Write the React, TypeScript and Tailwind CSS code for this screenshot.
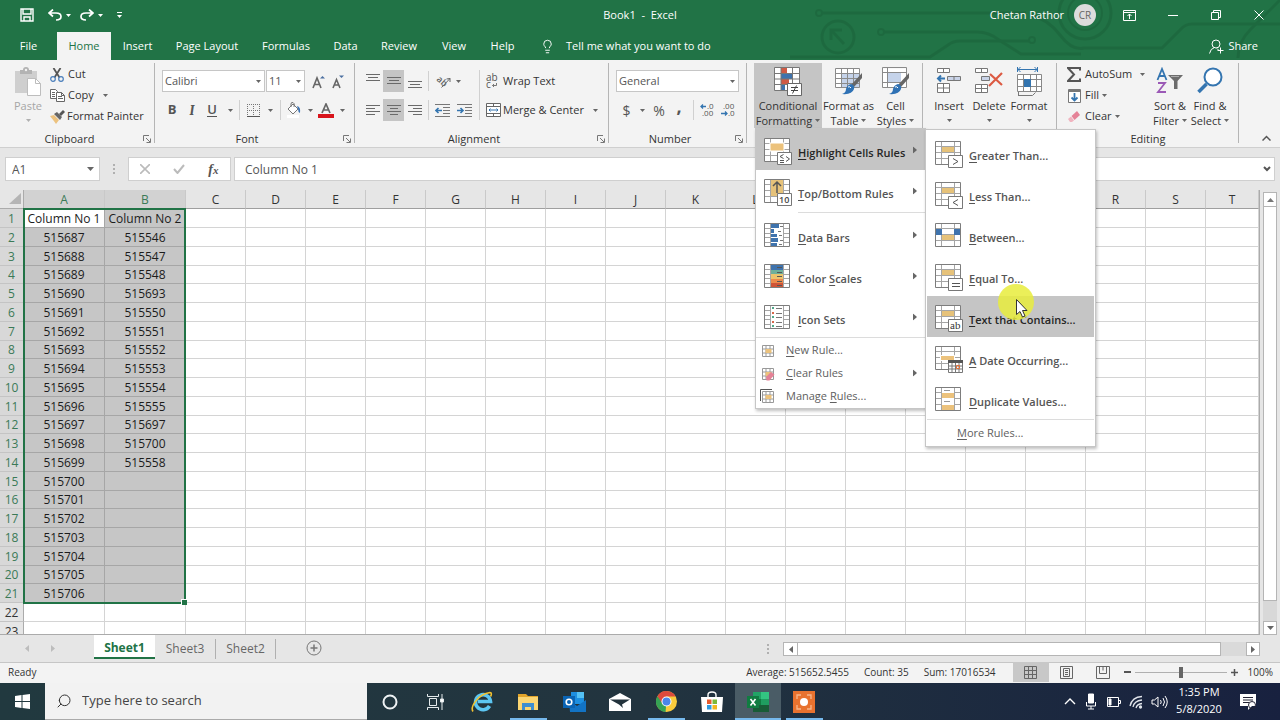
import type { ReactNode } from 'react';
import { Lightbulb, Search } from 'lucide-react';

const tabs = [
  { name: 'File', width: 'w-[57px]' },
  { name: 'Home', width: 'w-[54px]', active: true },
  { name: 'Insert', width: 'w-[53px]' },
  { name: 'Page Layout', width: 'w-[86px]' },
  { name: 'Formulas', width: 'w-[72px]' },
  { name: 'Data', width: 'w-[47px]' },
  { name: 'Review', width: 'w-[60px]' },
  { name: 'View', width: 'w-[50px]' },
  { name: 'Help', width: 'w-[47px]' },
];

const columns = 'ABCDEFGHIJKLMNOPQRST'.split('');

const columnA = [
  'Column No 1', '515687', '515688', '515689', '515690', '515691', '515692', '515693', '515694', '515695', '515696',
  '515697', '515698', '515699', '515700', '515701', '515702', '515703', '515704', '515705', '515706',
];
const columnB = [
  'Column No 2', '515546', '515547', '515548', '515693', '515550', '515551', '515552', '515553', '515554', '515555',
  '515697', '515700', '515558',
];

const rows = Array.from({ length: 23 }, (_, i) => ({ n: i + 1, a: columnA[i] ?? '', b: columnB[i] ?? '' }));

/* ---------- small shared pieces ---------- */

function Caret({ className = 'text-[#666]' }: { className?: string }) {
  return (
    <svg width="5" height="3" viewBox="0 0 5 3" className={`shrink-0 ${className}`}>
      <path d="M0 0h5L2.5 3z" fill="currentColor" />
    </svg>
  );
}

function Launcher({ label }: { label: string }) {
  return (
    <button aria-label={label} className="absolute right-1 bottom-1">
      <svg width="8" height="8" viewBox="0 0 8 8" fill="none" stroke="#777">
        <path d="M.5 6V.5H6M3 3l4 4M7.500 3.500v4h-4" />
      </svg>
    </button>
  );
}

function Group({ label, width, launcher, children }: { label?: string; width: string; launcher?: boolean; children: ReactNode }) {
  return (
    <section className={`relative flex shrink-0 flex-col ${width}`}>
      <div className="flex h-[68px] shrink-0">{children}</div>
      {label && <div className={`text-center leading-4 ${launcher ? 'pr-4' : ''}`}>{label}</div>}
      {launcher && <Launcher label={`${label} settings`} />}
      <div className="absolute top-0 right-0 bottom-1 w-px bg-[#b5b5b5]" />
    </section>
  );
}

function Divider() {
  return <div className="h-5 w-px shrink-0 bg-[#d0d0d0]" />;
}

function IconButton({ label, width = 'w-[21px]', active, children }: { label: string; width?: string; active?: boolean; children: ReactNode }) {
  return (
    <button aria-label={label} className={`flex h-[22px] shrink-0 items-center justify-center ${width} ${active ? 'bg-[#c5c5c5]' : ''}`}>
      {children}
    </button>
  );
}

function BigButton({ lines, width, active, children }: { lines: [string, string?]; width: string; active?: boolean; children: ReactNode }) {
  return (
    <button className={`flex h-[65px] shrink-0 flex-col items-center pt-1 ${width} ${active ? 'bg-[#c5c5c5]' : ''}`}>
      <span className="flex h-[31px] items-start">{children}</span>
      <span className="leading-[15px] whitespace-nowrap">{lines[0]}</span>
      <span className="flex h-[15px] items-center gap-[3px] leading-[15px]">
        {lines[1]}
        <Caret />
      </span>
    </button>
  );
}

function Lines({ rows: r }: { rows: [number, number, number][] }) {
  return (
    <svg width="14" height="14" viewBox="0 0 14 14" stroke="#6a6a6a">
      {r.map(([x1, x2, y]) => (
        <path key={y} d={`M${x1} ${y}.5H${x2}`} />
      ))}
    </svg>
  );
}

/* ---------- ribbon icons ---------- */

function PasteIcon() {
  return (
    <svg width="28" height="30" viewBox="0 0 28 30">
      <path d="M1 4h22v22H1z" fill="#cfcfcf" />
      <path d="M6 3h3q0-3 3-3t3 3h3v4H6z" fill="#b3b3b3" />
      <circle cx="12" cy="3" r="1.200" fill="#f3f3f3" />
      <path d="M13.500 11.500h8l5 5v12h-13z" fill="#fff" stroke="#bdbdbd" />
      <path d="M21.500 11.500v5h5" fill="none" stroke="#bdbdbd" />
    </svg>
  );
}

function CutIcon() {
  return (
    <svg width="14" height="14" viewBox="0 0 14 14" fill="none">
      <path d="M3.500 0 9.500 9.500M10.500 0 4.500 9.500" stroke="#555" strokeWidth="1.800" />
      <circle cx="3" cy="11" r="2.300" stroke="#4a7ebb" strokeWidth="1.200" />
      <circle cx="11" cy="11" r="2.300" stroke="#4a7ebb" strokeWidth="1.200" />
    </svg>
  );
}

function CopyIcon() {
  return (
    <svg width="15" height="13" viewBox="0 0 15 13" fill="#fff" stroke="#666">
      <path d="M.5.5h5l2 2v7h-7zM2 3.500h3M2 5.500h3M2 7.500h3" />
      <path d="M6.500 3.500h5l3 3v6h-8zM8 7.500h4M8 9.500h5" />
      <path d="M11.500 3.500v3h3" fill="none" />
    </svg>
  );
}

function PainterIcon() {
  return (
    <svg width="15" height="14" viewBox="0 0 15 14">
      <path d="M0 6l4-1 5 5-3 4q-2-3-6-8z" fill="#ecc27f" />
      <path d="M4 4l3-2 5 5-2 3z" fill="#666" />
      <path d="M9 4l4-4 2 2-4 4z" fill="#555" />
    </svg>
  );
}

function FontSizeIcon({ up }: { up?: boolean }) {
  return (
    <svg width="14" height="15" viewBox="0 0 14 15">
      <path d={up ? 'M1 14 5 4 9 14M2.500 10.500h5' : 'M2 14 5.500 5.500 9 14M3.500 11h4'} fill="none" stroke="#666" strokeWidth="1.600" />
      <path d={up ? 'M8 4.500 10.500 2l2.500 2.500z' : 'M8 1.500h5L10.500 4z'} fill="#4a6fa0" />
    </svg>
  );
}

function BordersIcon() {
  return (
    <svg width="13" height="13" viewBox="0 0 13 13" fill="none" stroke="#777">
      <path d="M.5 0v12M6.500 0v12M12.500 0v12M0 .5h13M0 6.500h13" strokeDasharray="1 1" />
      <path d="M0 12.500h13" stroke="#555" />
    </svg>
  );
}

function BucketIcon() {
  return (
    <svg width="14" height="16" viewBox="0 0 14 16" fill="none">
      <path d="M1 7 6 2l5 5-5 5z" fill="#fff" stroke="#777" />
      <path d="M4 5V2q0-2 2-1.500T7 5" stroke="#777" />
      <path d="M10 4q4 1 3 7-2-1-2-4z" fill="#3f75b5" />
      <path d="M0 13h12v3H0z" fill="#fff" />
    </svg>
  );
}

function FontColorIcon() {
  return (
    <svg width="16" height="15" viewBox="0 0 16 15">
      <path d="M4 10 8 1l4 9M5.500 7h5" fill="none" stroke="#666" strokeWidth="1.700" />
      <path d="M0 11h16v4H0z" fill="#d8141b" />
    </svg>
  );
}

function OrientationIcon() {
  return (
    <svg width="16" height="16" viewBox="0 0 16 16" className="overflow-visible">
      <text x="1" y="7" transform="rotate(42 1 7)" fontSize="9" fontWeight="600" fill="#666" fontFamily="Open Sans, sans-serif">ab</text>
      <path d="M6.500 14.500 15 5.500M15 5.500l-3.500.5M15 5.500v3.500" fill="none" stroke="#666" />
    </svg>
  );
}

function IndentIcon({ right }: { right?: boolean }) {
  return (
    <svg width="16" height="13" viewBox="0 0 16 13" fill="none">
      <path d="M0 .5h15M8 3.500h7M8 6.500h7M8 9.500h7M0 12.500h15" stroke="#777" />
      <path d={right ? 'M0 6.500h6M3.500 4 6 6.500 3.500 9' : 'M7 6.500H1M3.500 4 1 6.500 3.500 9'} stroke="#3475b0" strokeWidth="1.600" />
    </svg>
  );
}

function WrapIcon() {
  return (
    <svg width="13" height="15" viewBox="0 0 13 15" fill="#555" fontFamily="Open Sans, sans-serif" fontSize="10" className="overflow-visible">
      <text x="0" y="7">ab</text>
      <text x="0" y="14">c</text>
      <path d="M10.500 9v2.500H6.500M8 10l-1.500 1.500L8 13" fill="none" stroke="#777" />
    </svg>
  );
}

function MergeIcon() {
  return (
    <svg width="15" height="14" viewBox="0 0 15 14" fill="none">
      <path d="M.5.5h14v13H.5zM.5 3.500h14M.5 10.500h14M7.500 0v3M7.500 11v3" fill="#fff" stroke="#666" />
      <path d="M3 7h9M4.500 5.500 3 7l1.500 1.500M10.500 5.500 12 7l-1.500 1.500" stroke="#3475b0" />
    </svg>
  );
}

function DecimalIcon({ more }: { more?: boolean }) {
  return (
    <svg width="15" height="14" viewBox="0 0 15 14" fontSize="8" fill="#555" fontFamily="Open Sans, sans-serif" className="overflow-visible">
      <text x={more ? 7 : 2} y="6">{more ? '.0' : '.00'}</text>
      <text x={more ? 2 : 7} y="13">{more ? '.00' : '.0'}</text>
      <path d={more ? 'M6 3.500H1M3 1.500l-2 2 2 2' : 'M0 10.500h6M4 8.500l2 2-2 2'} fill="none" stroke="#3475b0" strokeWidth="1.300" />
    </svg>
  );
}

function ConditionalIcon() {
  return (
    <svg width="28" height="29" viewBox="0 0 28 29">
      <path d="M.5.5h25v23H.5z" fill="#fff" />
      <path d="M7 1h6v5H7zM7 12h8v5H7z" fill="#cf5a45" />
      <path d="M7 6h11v6H7zM7 17h4v6H7z" fill="#3f73ad" />
      <path d="M.5.5h25v23H.5zM.5 6.500h25M.5 12h25M.5 17.500h25M7 0v23M18.500 0v23" fill="none" stroke="#777" />
      <path d="M13.500 16.500h14v12h-14z" fill="#fff" stroke="#666" />
      <path d="M17 20.500h7M17 23.500h7M22.500 18.500l-4 8" stroke="#444" fill="none" />
    </svg>
  );
}

function TableBrushIcon({ cell }: { cell?: boolean }) {
  return (
    <svg width="28" height="29" viewBox="0 0 28 29">
      <path d="M.5 1.500h24v19H.5z" fill="#fff" />
      <path d={cell ? 'M5 6h14v9H5z' : 'M7 7h18v14H7z'} fill="#c5d3ea" />
      <path
        d={cell ? 'M.5.5h24v20H.5zM.5 5.500h24M5.500 0v20M.5 15.500h19' : 'M.5 1.500h24v19H.5zM.5 6.500h24M.5 11.500h24M.5 16.500h24M6.500 1v19M12.500 1v19M18.500 1v19'}
        fill="none"
        stroke="#8a8a8a"
      />
      <path d="M27 6v5l-8 9-3-2z" fill="#666" />
      <path d="M16 17q4 1 3 5-2 6-12 5 4-1 4-5 1-4 5-5z" fill="#2f72b5" />
      <path d="M13 20q2-1 3 1" stroke="#fff" fill="none" />
    </svg>
  );
}

function InsertCellsIcon() {
  return (
    <svg width="26" height="27" viewBox="0 0 26 27" fill="none" stroke="#777">
      <path d="M1.500 1.500h12v4h-12zM7.500 1.500v4M1.500 16.500h12v9h-12zM7.500 16.500v9M1.500 21h12" fill="#fff" />
      <path d="M11.500 9.500h13v4h-13zM18 9.500v4" fill="#c9d3e8" />
      <path d="M9 11.500H2M5 8.500l-3 3 3 3" stroke="#3475b0" strokeWidth="2" />
    </svg>
  );
}

function DeleteCellsIcon() {
  return (
    <svg width="28" height="27" viewBox="0 0 28 27" fill="none" stroke="#777">
      <path d="M.5 1.500h12v4H.5zM6.500 1.500v4M.5 17.500h12v8H.5zM6.500 17.500v8M.5 21.500h12" fill="#fff" />
      <path d="M6.500 9.500h8v4h-8z" fill="#c9d3e8" />
      <path d="M15 7l12 11M27 6 14 19" stroke="#dc5a42" strokeWidth="2.200" />
    </svg>
  );
}

function FormatCellsIcon() {
  return (
    <svg width="27" height="30" viewBox="0 0 27 30" fill="none">
      <path d="M1.500 0v5M21.500 0v5M2 2.500h19M4.500 0 2 2.500 4.500 5M18.500 0 21 2.500 18.500 5" stroke="#3475b0" />
      <path d="M1.500 7.500h24v17h-24zM1.500 12.500h24M1.500 19.500h24M7.500 7v18M14.500 7v18M20.500 7v18" fill="#fff" stroke="#888" />
      <path d="M8 12h7v8H8z" fill="#3475b0" />
      <path d="M2.500 28.500h14l3-3M2.500 25v4" stroke="#777" />
    </svg>
  );
}

function FillIcon() {
  return (
    <svg width="13" height="14" viewBox="0 0 13 14" fill="none">
      <path d="M.5.5h12v13H.5z" fill="#fff" stroke="#777" />
      <path d="M0 2h13" stroke="#777" strokeWidth="2" />
      <path d="M6.500 4v8M3.500 8.500l3 3 3-3" stroke="#3475b0" strokeWidth="1.800" />
    </svg>
  );
}

function EraserIcon() {
  return (
    <svg width="13" height="12" viewBox="0 0 13 12">
      <path d="M3.500 5 9 0l3 4-5.500 5z" fill="#e58297" />
      <path d="M3 5.500 6 9.500 4 11H2L0 8z" fill="#f0b4bf" />
    </svg>
  );
}

function SortIcon() {
  return (
    <svg width="28" height="28" viewBox="0 0 28 28" fill="none">
      <path d="M1.500 13 6 2l4.500 11M3 9h6" stroke="#3475b0" strokeWidth="1.800" />
      <path d="M2 16h7L2 25h8" stroke="#9b59b6" strokeWidth="1.800" />
      <path d="M12 8h15l-5.500 6v8h-3.500v-8z" fill="#6c6c6c" />
      <path d="M15 9.500h8" stroke="#aaa" />
    </svg>
  );
}

function FindIcon() {
  return (
    <svg width="26" height="27" viewBox="0 0 26 27" fill="none" stroke="#3475b0">
      <circle cx="16" cy="10" r="8.500" fill="#fff" strokeWidth="2" />
      <path d="M9.500 17 1.500 25" strokeWidth="3.500" />
    </svg>
  );
}

/* ---------- menu icons ---------- */

function GridIcon({ fill, badge, dense }: { fill?: ReactNode; badge?: ReactNode; dense?: boolean }) {
  return (
    <svg width="28" height="28" viewBox="0 0 28 28" className="shrink-0">
      <path d="M.5.5h25v23H.5z" fill="#fff" />
      <path
        d={dense ? 'M1 5.500h24M1 10.500h24M1 14.500h24M1 19.500h24M6.500 1v22M19.500 1v22' : 'M1 5.500h24M1 11.500h24M1 17.500h24M6.500 1v22M19.500 1v22'}
        fill="none"
        stroke="#a5a5a5"
      />
      {fill}
      <path d="M.5.5h25v23H.5z" fill="none" stroke="#7d7d7d" />
      {badge}
    </svg>
  );
}

function Badge({ children }: { children: ReactNode }) {
  return (
    <g fill="none" stroke="#555">
      <path d="M13.500 14.500h14v12h-14z" fill="#fff" stroke="#777" />
      {children}
    </g>
  );
}

const goldCell = <path d="M7 6h12v5H7z" fill="#e6c27a" />;

const ruleItems = [
  {
    name: ['', 'H', 'ighlight Cells Rules'],
    active: true,
    icon: (
      <GridIcon
        fill={<path d="M6 5h14v8H6z" fill="#ecc27c" stroke="#fff" />}
        badge={<Badge><path d="M19.500 16.500 16 18.500l3.500 2M16 22.500h4M16 24.500h4M22 18.500l3.500 2.500-3.500 2.500" /></Badge>}
      />
    ),
  },
  {
    name: ['', 'T', 'op/Bottom Rules'],
    icon: (
      <GridIcon
        fill={<><path d="M7 1h12v16H7z" fill="#e6c27a" /><path d="M13 14V3M9 7l4-4 4 4" fill="none" stroke="#555" strokeWidth="1.500" /></>}
        badge={<Badge><text x="15" y="24" fontSize="9" fill="#444" stroke="none" fontFamily="Open Sans, sans-serif">10</text></Badge>}
      />
    ),
  },
  {
    name: ['', 'D', 'ata Bars'],
    icon: (
      <GridIcon
        dense
        fill={<><path d="M7 1h12v22H7z" fill="#fff" /><path d="M7 1h8v4H7zM7 6h3v4H7zM7 11h6v3H7zM7 15h7v4H7zM7 20h6v3H7z" fill="#3f73ad" /><path d="M16 3.500h3M14 8.500h3M15 12.500h3M16 17.500h3M15 21.500h3" stroke="#777" /></>}
      />
    ),
  },
  {
    name: ['Color ', 'S', 'cales'],
    icon: (
      <GridIcon
        dense
        fill={
          <>
            <path d="M7 1h12v5H7z" fill="#3f73ad" />
            <path d="M7 6h12v4H7z" fill="#6db09a" />
            <path d="M7 10h12v5H7z" fill="#ecc46c" />
            <path d="M7 15h12v4H7z" fill="#ec8a4b" />
            <path d="M7 19h12v4H7z" fill="#cf5436" />
            <path d="M13 3.500h5M13 8.500h5M13 12.500h5M13 17.500h5M13 21.500h5" stroke="#555" />
          </>
        }
      />
    ),
  },
  {
    name: ['', 'I', 'con Sets'],
    icon: (
      <GridIcon
        dense
        fill={
          <>
            <path d="M7 1h12v22H7z" fill="#fff" />
            <path d="M12 3.500h6M12 8.500h6M12 12.500h6M12 17.500h6M12 21.500h6" stroke="#777" />
            <path d="M8 2h2v2H8zM8 11h2v2H8zM8 20h2v2H8z" fill="#4fa98a" />
            <path d="M8 7h2v2H8zM8 16h2v2H8z" fill="#d9684a" />
          </>
        }
      />
    ),
  },
];

function SmallGrid({ eraser, stacked }: { eraser?: boolean; stacked?: boolean }) {
  return (
    <svg width="15" height="15" viewBox="0 0 15 15" fill="none" className="shrink-0">
      {stacked && <path d="M.5 12V.5H12" stroke="#555" />}
      <path d="M2.500 2.500h11v11h-11zM2.500 6h11M2.500 10h11M6 2.500v11M10 2.500v11" fill="#fff" stroke="#999" />
      <path d="M5.500 6h6v4h-6z" fill="#ecc27c" />
      {eraser && <path d="M6 11l5-5 3.500 2.500-5 6H6.500z" fill="#e58297" />}
    </svg>
  );
}

const manageItems = [
  { name: ['', 'N', 'ew Rule...'], icon: <SmallGrid /> },
  { name: ['', 'C', 'lear Rules'], icon: <SmallGrid eraser />, more: true },
  { name: ['Manage ', 'R', 'ules...'], icon: <SmallGrid stacked /> },
];

const highlightItems = [
  { name: ['', 'G', 'reater Than...'], icon: <GridIcon fill={goldCell} badge={<Badge><path d="M18 17.500l5 3-5 3" /></Badge>} /> },
  { name: ['', 'L', 'ess Than...'], icon: <GridIcon fill={goldCell} badge={<Badge><path d="M23 17.500l-5 3 5 3" /></Badge>} /> },
  {
    name: ['', 'B', 'etween...'],
    icon: <GridIcon fill={<><path d="M1 6h6v6H1zM19 6h6v6h-6z" fill="#3f73ad" /><path d="M7 12h12v5H7z" fill="#e6c27a" /></>} />,
  },
  { name: ['', 'E', 'qual To...'], icon: <GridIcon fill={goldCell} badge={<Badge><path d="M17 19.500h8M17 22.500h8" /></Badge>} /> },
  {
    name: ['', 'T', 'ext that Contains...'],
    active: true,
    icon: (
      <GridIcon
        fill={goldCell}
        badge={<Badge><text x="15" y="24" fontSize="11" fontWeight="400" fill="#333" stroke="none" fontFamily="Liberation Serif, serif">ab</text></Badge>}
      />
    ),
  },
  {
    name: ['', 'A', ' Date Occurring...'],
    icon: (
      <GridIcon
        fill={<path d="M5.500 9.500h14v5h-14z" fill="#ecc27c" stroke="#fff" />}
        badge={
          <g fill="none">
            <path d="M13.500 14.500h14v12h-14zM13.500 20h14M13.500 23h14M17 17v9.500M20.500 17v9.500M24 17v9.500" fill="#fff" stroke="#777" />
            <path d="M13 14h15v3H13z" fill="#555" />
            <path d="M21.500 19.500h3v3h-3z" stroke="#e0703a" />
          </g>
        }
      />
    ),
  },
  {
    name: ['', 'D', 'uplicate Values...'],
    icon: <GridIcon fill={<><path d="M7 1h12v22H7z" fill="#fff" /><path d="M7 6h12v5H7zM7 18h12v5H7z" fill="#ecc27c" /><path d="M9 3.500h6M9 14.500h6" stroke="#999" /></>} />,
  },
];

function Mnemonic({ parts }: { parts: string[] }) {
  return (
    <span className="whitespace-nowrap">
      {parts[0]}
      <span className="underline underline-offset-2">{parts[1]}</span>
      {parts[2]}
    </span>
  );
}

function MoreArrow() {
  return (
    <svg width="4" height="7" viewBox="0 0 4 7" className="absolute top-1/2 right-2 -translate-y-1/2">
      <path d="M0 0v7l4-3.500z" fill="#666" />
    </svg>
  );
}

function BigMenuItem({ item, arrow }: { item: { name: string[]; icon: ReactNode; active?: boolean }; arrow?: boolean }) {
  return (
    <button
      role="menuitem"
      className={`relative flex h-[41px] w-full items-center gap-[6px] pt-1 pl-2 text-left font-semibold ${item.active ? 'bg-[#c5c5c5] text-[#262626]' : 'text-[#555]'}`}
    >
      {item.icon}
      <span className="pt-[3px]">
        <Mnemonic parts={item.name} />
      </span>
      {arrow && <MoreArrow />}
    </button>
  );
}

/* ---------- taskbar ---------- */

const apps = [
  {
    name: 'Cortana',
    icon: <svg width="18" height="18" viewBox="0 0 18 18"><circle cx="9" cy="9" r="6.500" fill="none" stroke="#eef2f4" strokeWidth="2" /></svg>,
  },
  {
    name: 'Task View',
    icon: (
      <svg width="18" height="18" viewBox="0 0 18 18" fill="none" stroke="#e4eaec">
        <path d="M.5 1v2.500h11V1M.5 17v-2.500h11V17M2.500 5.500h7v7h-7zM15 1v16" />
        <path d="M13.500 6h3v3h-3z" fill="#fff" />
      </svg>
    ),
  },
  {
    name: 'Internet Explorer',
    icon: (
      <svg width="22" height="22" viewBox="0 0 22 22" fill="none">
        <path d="M18.500 15a7.500 7.500 0 1 1 1-4.500H7" stroke="#5cc6f2" strokeWidth="3.600" />
        <path d="M2 20.500C-1 16 7 3 19 1.500c2 0 1.500 2.500.5 4" stroke="#f2c230" strokeWidth="1.600" />
      </svg>
    ),
  },
  {
    name: 'File Explorer',
    open: true,
    icon: (
      <svg width="20" height="18" viewBox="0 0 20 18">
        <path d="M0 1h8l2 2h10v14H0z" fill="#e2a52b" />
        <path d="M0 4h20v13H0z" fill="#fbd672" />
        <path d="M4 10h12v7h-3v-3H7v3H4z" fill="#3e8fd0" />
      </svg>
    ),
  },
  {
    name: 'Outlook',
    icon: (
      <svg width="23" height="21" viewBox="0 0 23 21">
        <path d="M8 1h13v12H8z" fill="#1d8fe0" />
        <path d="M14 1h7v6h-7z" fill="#54c1f4" />
        <path d="M6 9l8 6 9-6v12H7z" fill="#1273c4" />
        <path d="M0 5h12v12H0z" fill="#0a64b4" />
        <circle cx="6" cy="11" r="2.800" fill="none" stroke="#fff" strokeWidth="1.600" />
      </svg>
    ),
  },
  {
    name: 'Mail',
    icon: (
      <svg width="24" height="20" viewBox="0 0 24 20">
        <path d="M1 7 12 1l11 6v12H1z" fill="#fff" />
        <path d="M2 7.500h20l-8 5 1 3.500-4-3.500z" fill="#22323c" />
      </svg>
    ),
  },
  {
    name: 'Chrome',
    open: true,
    icon: (
      <svg width="21" height="21" viewBox="0 0 21 21">
        <circle cx="10.500" cy="10.500" r="10.500" fill="#f9cb3c" />
        <path d="M10.500 10.500 1.400 5.200A10.500 10.500 0 0 0 9.500 21z" fill="#35a254" />
        <path d="M1.400 5.200A10.500 10.500 0 0 1 19.600 5.500H10.500L6 12z" fill="#dc4a3d" />
        <circle cx="10.500" cy="10.500" r="5" fill="#fff" />
        <circle cx="10.500" cy="10.500" r="4" fill="#4a86e8" />
      </svg>
    ),
  },
  {
    name: 'Microsoft Store',
    icon: (
      <svg width="22" height="22" viewBox="0 0 22 22">
        <path d="M7 7V4q0-3 4-3t4 3v3" fill="none" stroke="#fff" strokeWidth="1.400" />
        <path d="M0 6h22l-1 15H1z" fill="#fff" />
        <path d="M6 8.500h4.500V13H6z" fill="#e85a2c" />
        <path d="M11.500 8.500H16V13h-4.500z" fill="#7cb93a" />
        <path d="M6 14h4.500v4.500H6z" fill="#2f9be0" />
        <path d="M11.500 14H16v4.500h-4.500z" fill="#f3b61f" />
      </svg>
    ),
  },
  {
    name: 'Excel',
    open: true,
    active: true,
    icon: (
      <svg width="22" height="20" viewBox="0 0 22 20">
        <path d="M6 0h16v20H6z" fill="#21a366" />
        <path d="M14 0h8v7h-8z" fill="#33c481" />
        <path d="M6 7h8v7H6z" fill="#107c41" />
        <path d="M6 13h16v7H6z" fill="#185c37" />
        <path d="M14 7h8v6h-8z" fill="#1f9d60" />
        <path d="M0 4h12v12H0z" fill="#107c41" />
        <path d="M3.500 7l5 6.500M8.500 7l-5 6.500" stroke="#fff" strokeWidth="1.600" />
      </svg>
    ),
  },
  {
    name: 'Screen Recorder',
    open: true,
    icon: (
      <svg width="22" height="22" viewBox="0 0 22 22" fill="none">
        <path d="M0 0h22v22H0z" fill="#e8722f" />
        <circle cx="11" cy="11" r="4" fill="#fff" />
        <path d="M4 8V4h4M14 4h4v4M18 14v4h-4M8 18H4v-4" stroke="#f6b68c" strokeWidth="1.300" />
      </svg>
    ),
  },
];

/* ---------- sections ---------- */

function TitleArt() {
  return (
    <svg className="absolute top-0 right-0 h-[60px] w-[500px]" viewBox="0 0 500 60" fill="none" stroke="#1b6139" strokeWidth="3">
      <g opacity=".5">
        <circle cx="39" cy="13" r="3" strokeWidth="2" />
        <path d="M42 13h204" />
        <circle cx="58" cy="37" r="16" />
        <path d="M64 44 52 31M51 40V30h11" />
        <circle cx="101" cy="32" r="3" strokeWidth="2" />
        <path d="M104 32h93q12 0 22 8l22 14h60" />
        <path d="M10 57h140l18-12q5-4 12-4h69" />
        <circle cx="252" cy="40" r="3" strokeWidth="2" />
        <path d="M250 15q18 4 30 20t24 13h78l18-18q5-6 12-6h88" />
        <circle cx="305" cy="13" r="26" />
        <circle cx="305" cy="13" r="17" strokeWidth="2" />
        <path d="M458 58q0-16 12-28L500 0" />
      </g>
    </svg>
  );
}

function TitleBar() {
  return (
    <div className="relative flex h-[30px] items-center">
      <div className="flex flex-1 items-center">
        <button aria-label="Save" className="mr-[14px] ml-5">
          <svg width="14" height="14" viewBox="0 0 14 14" fill="none" stroke="#fff" strokeWidth="1.400">
            <path d="M1 1h12v12H1zM3 1v5h8V1M4 13V9h6v4" />
          </svg>
        </button>
        <button aria-label="Undo" className="flex items-center gap-1">
          <svg width="14" height="12" viewBox="0 0 14 12" fill="none" stroke="#fff" strokeWidth="1.700">
            <path d="M5 .5 1 4l4 3.500M1 4h7q5 0 5 3.500T8 11" />
          </svg>
          <Caret className="text-white" />
        </button>
        <button aria-label="Redo" className="ml-[9px] flex items-center gap-1">
          <svg width="14" height="12" viewBox="0 0 14 12" fill="none" stroke="#fff" strokeWidth="1.700">
            <path d="M9 .5 13 4 9 7.500M13 4H6Q1 4 1 7.500T6 11" />
          </svg>
          <Caret className="text-white" />
        </button>
        <button aria-label="Customize Quick Access Toolbar" className="ml-[14px] flex flex-col items-center gap-[2px]">
          <span className="h-px w-[5px] bg-white" />
          <Caret className="text-white" />
        </button>
      </div>
      <div className="whitespace-pre">Book1  -  Excel</div>
      <div className="flex flex-1 items-center justify-end">
        <span>Chetan Rathor</span>
        <span className="mr-3 ml-[10px] flex size-[22px] items-center justify-center rounded-full bg-[#dcdcdc] text-[10px] text-[#666]">CR</span>
        <button aria-label="Ribbon Display Options" className="flex h-[30px] w-[43px] items-center justify-center">
          <svg width="13" height="11" viewBox="0 0 13 11" fill="none" stroke="#fff">
            <path d="M.5.5h12v10H.5zM.5 2.500h12M6.500 9V4M4.500 6l2-2 2 2" />
          </svg>
        </button>
        <button aria-label="Minimize" className="flex h-[30px] w-[43px] items-center justify-center">
          <span className="h-px w-[10px] bg-white" />
        </button>
        <button aria-label="Restore" className="flex h-[30px] w-[43px] items-center justify-center">
          <svg width="10" height="10" viewBox="0 0 10 10" fill="none" stroke="#fff">
            <path d="M.5 2.500h7v7h-7zM2.500 2.500v-2h7v7h-2" />
          </svg>
        </button>
        <button aria-label="Close" className="flex h-[30px] w-[43px] items-center justify-center">
          <svg width="10" height="10" viewBox="0 0 10 10" fill="none" stroke="#fff">
            <path d="M.5.5l9 9M9.500.5l-9 9" />
          </svg>
        </button>
      </div>
    </div>
  );
}

function TabBar() {
  return (
    <nav className="relative flex h-[30px] items-end">
      {tabs.map((tab) => (
        <button key={tab.name} className={`h-[28px] shrink-0 whitespace-nowrap ${tab.width} ${tab.active ? 'bg-[#f3f3f3] text-[#217346]' : ''}`}>
          {tab.name}
        </button>
      ))}
      <button className="ml-[14px] flex h-[28px] items-center gap-[11px] whitespace-nowrap">
        <Lightbulb size={15} strokeWidth={1.5} />
        Tell me what you want to do
      </button>
      <button className="mr-[22px] ml-auto flex h-[28px] items-center gap-1">
        <svg width="15" height="15" viewBox="0 0 15 15" fill="none" stroke="#fff">
          <circle cx="7" cy="5" r="4" />
          <path d="M.5 14.500q1-5 5-6M8 9.500l1.500 1.500M11.500 8.500v6M8.500 11.500h6" />
        </svg>
        Share
      </button>
    </nav>
  );
}

function Ribbon() {
  return (
    <div className="relative flex h-[88px] shrink-0 border-b border-[#cfcfcf] bg-[#f3f3f3] pt-[3px] text-[#333]">
      <Group label="Clipboard" width="w-[155px]" launcher>
        <button className="ml-[14px] flex w-7 flex-col items-center pt-1 text-[#a6a6a6]">
          <PasteIcon />
          <span className="pt-px leading-[16px]">Paste</span>
          <span className="pt-[5px]"><Caret className="text-[#b0b0b0]" /></span>
        </button>
        <div className="ml-2 flex flex-col pt-px">
          <button className="flex h-[21px] items-center gap-1"><CutIcon />Cut</button>
          <button className="flex h-[21px] items-center gap-[3px]"><CopyIcon />Copy<span className="ml-[6px]"><Caret /></span></button>
          <button className="flex h-[21px] items-center gap-[2px] whitespace-nowrap"><PainterIcon />Format Painter</button>
        </div>
      </Group>

      <Group label="Font" width="w-[200px]" launcher>
        <div className="flex flex-col gap-[7px] pt-[7px] pl-[7px]">
          <div className="flex">
            <div className="relative mr-px flex items-center">
              <select aria-label="Font" className="h-[22px] w-[103px] appearance-none border border-[#c6c6c6] bg-white pl-[2px] text-[#555]">
                <option>Calibri</option>
              </select>
              <span className="absolute right-1"><Caret /></span>
            </div>
            <div className="relative mr-[3px] flex items-center">
              <select aria-label="Font size" className="h-[22px] w-[39px] appearance-none border border-[#c6c6c6] bg-white pl-[2px] text-[#555]">
                <option>11</option>
              </select>
              <span className="absolute right-1"><Caret /></span>
            </div>
            <IconButton label="Increase font size"><FontSizeIcon up /></IconButton>
            <IconButton label="Decrease font size" width="w-[17px]"><FontSizeIcon /></IconButton>
          </div>
          <div className="flex items-center">
            <IconButton label="Bold" width="w-[20px]"><b className="text-[13px] text-[#555]">B</b></IconButton>
            <IconButton label="Italic" width="w-[20px]"><i className="font-serif text-[14px] font-bold text-[#555]">I</i></IconButton>
            <IconButton label="Underline" width="w-[20px]"><span className="border-b border-[#555] text-[13px] leading-[13px] font-semibold text-[#555]">U</span></IconButton>
            <IconButton label="Underline style" width="w-[17px]"><Caret /></IconButton>
            <Divider />
            <IconButton label="Borders" width="w-[27px]"><BordersIcon /></IconButton>
            <IconButton label="Border style" width="w-[7px]"><Caret /></IconButton>
            <span className="ml-[6px]"><Divider /></span>
            <IconButton label="Fill color" width="w-[25px]"><BucketIcon /></IconButton>
            <IconButton label="Fill color list" width="w-[8px]"><Caret /></IconButton>
            <IconButton label="Font color" width="w-[24px]"><FontColorIcon /></IconButton>
            <IconButton label="Font color list" width="w-[8px]"><Caret /></IconButton>
          </div>
        </div>
      </Group>

      <Group label="Alignment" width="w-[254px]" launcher>
        <div className="flex flex-col gap-[7px] pt-[7px] pl-[7px]">
          <div className="flex items-center">
            <IconButton label="Top align"><Lines rows={[[0, 14, 0], [2, 12, 3], [0, 14, 6]]} /></IconButton>
            <IconButton label="Middle align" active><Lines rows={[[0, 14, 3], [2, 12, 6], [0, 14, 9]]} /></IconButton>
            <IconButton label="Bottom align"><Lines rows={[[0, 14, 7], [2, 12, 10], [0, 14, 13]]} /></IconButton>
            <span className="ml-[3px]"><Divider /></span>
            <IconButton label="Orientation" width="w-[27px]"><OrientationIcon /></IconButton>
            <Caret />
          </div>
          <div className="flex items-center">
            <IconButton label="Align left"><Lines rows={[[0, 14, 2], [0, 9, 5], [0, 14, 8], [0, 9, 11]]} /></IconButton>
            <IconButton label="Center" active><Lines rows={[[0, 14, 2], [3, 11, 5], [0, 14, 8], [3, 11, 11]]} /></IconButton>
            <IconButton label="Align right"><Lines rows={[[0, 14, 2], [5, 14, 5], [0, 14, 8], [5, 14, 11]]} /></IconButton>
            <span className="ml-[3px]"><Divider /></span>
            <IconButton label="Decrease indent" width="w-[28px]"><IndentIcon /></IconButton>
            <IconButton label="Increase indent" width="w-[16px]"><IndentIcon right /></IconButton>
          </div>
        </div>
        <div className="mt-[7px] ml-[6px] h-[50px] w-px bg-[#d0d0d0]" />
        <div className="flex flex-col gap-[7px] pt-[7px] pl-[6px]">
          <button className="flex h-[22px] items-center gap-1 whitespace-nowrap"><WrapIcon />Wrap Text</button>
          <button className="flex h-[22px] items-center gap-[2px] whitespace-nowrap"><MergeIcon />Merge &amp; Center<span className="ml-[7px]"><Caret /></span></button>
        </div>
      </Group>

      <Group label="Number" width="w-[138px]" launcher>
        <div className="flex flex-col gap-[7px] pt-[7px] pl-[7px]">
          <div className="relative flex items-center">
            <select aria-label="Number format" className="h-[22px] w-[123px] appearance-none border border-[#c6c6c6] bg-white pl-[2px] text-[#555]">
              <option>General</option>
            </select>
            <span className="absolute right-1"><Caret /></span>
          </div>
          <div className="flex items-center text-[14px] text-[#555]">
            <IconButton label="Accounting format">$</IconButton>
            <IconButton label="Accounting format list" width="w-[10px]"><Caret /></IconButton>
            <IconButton label="Percent style" width="w-[24px]">%</IconButton>
            <IconButton label="Comma style" width="w-[16px]"><span className="pb-2 text-[18px] font-bold">,</span></IconButton>
            <span className="ml-[6px]"><Divider /></span>
            <IconButton label="Increase decimal" width="w-[27px]"><DecimalIcon more /></IconButton>
            <IconButton label="Decrease decimal" width="w-[15px]"><DecimalIcon /></IconButton>
          </div>
        </div>
      </Group>

      <Group width="w-[176px]">
        <div className="flex pl-[7px]">
          <BigButton lines={['Conditional', 'Formatting']} width="w-[68px]" active><ConditionalIcon /></BigButton>
          <BigButton lines={['Format as', 'Table']} width="w-[53px]"><TableBrushIcon /></BigButton>
          <BigButton lines={['Cell', 'Styles']} width="w-[41px]"><TableBrushIcon cell /></BigButton>
        </div>
      </Group>

      <Group width="w-[134px]">
        <div className="flex pl-[6px]">
          <BigButton lines={['Insert']} width="w-[40px]"><InsertCellsIcon /></BigButton>
          <BigButton lines={['Delete']} width="w-[40px]"><DeleteCellsIcon /></BigButton>
          <BigButton lines={['Format']} width="w-[40px]"><FormatCellsIcon /></BigButton>
        </div>
      </Group>

      <Group label="Editing" width="w-[182px]">
        <div className="flex w-[89px] flex-col pt-px pl-[10px]">
          <button className="flex h-[21px] items-center gap-1 whitespace-nowrap">
            <svg width="14" height="15" viewBox="0 0 14 15"><path d="M13 3.500V1H1l6 6.500L1 14h12v-2.500" fill="none" stroke="#555" strokeWidth="2" /></svg>
            AutoSum<span className="ml-1"><Caret /></span>
          </button>
          <button className="flex h-[21px] items-center gap-[3px]"><span className="w-[15px] pl-px"><FillIcon /></span>Fill<Caret /></button>
          <button className="flex h-[21px] items-center gap-[3px]"><span className="w-[15px] pl-px"><EraserIcon /></span>Clear<Caret /></button>
        </div>
        <div className="flex pl-1">
          <BigButton lines={['Sort &', 'Filter']} width="w-[40px]"><SortIcon /></BigButton>
          <BigButton lines={['Find &', 'Select']} width="w-[40px]"><FindIcon /></BigButton>
        </div>
      </Group>

      <button aria-label="Collapse the Ribbon" className="mt-auto mr-[9px] mb-[6px] ml-auto">
        <svg width="9" height="6" viewBox="0 0 9 6" fill="none" stroke="#555" strokeWidth="1.500"><path d="M.5 5.500l4-4 4 4" /></svg>
      </button>

      {/* Conditional Formatting drop-down and its submenu */}
      <div role="menu" aria-label="Conditional Formatting" className="absolute top-[68px] left-[755px] z-10 w-[171px] border border-[#c6c6c6] bg-white pb-px shadow-[1px_2px_3px_rgba(0,0,0,0.25)]">
        {ruleItems.slice(0, 2).map((item) => (
          <BigMenuItem key={item.name.join('')} item={item} arrow />
        ))}
        <div className="mt-px mb-px ml-[42px] h-px bg-[#dcdcdc]" />
        {ruleItems.slice(2).map((item) => (
          <BigMenuItem key={item.name.join('')} item={item} arrow />
        ))}
        <div className="mb-px h-px bg-[#dcdcdc]" />
        <div className="flex flex-col gap-px text-[#606060]">
          {manageItems.map((item) => (
            <button key={item.name.join('')} role="menuitem" className="relative flex h-[22px] items-center gap-[11px] pl-1 text-left">
              {item.icon}
              <Mnemonic parts={item.name} />
              {item.more && <MoreArrow />}
            </button>
          ))}
        </div>
      </div>

      <div role="menu" aria-label="Highlight Cells Rules" className="absolute top-[69px] left-[925px] z-20 w-[171px] border border-[#c6c6c6] bg-white px-px pt-[2px] shadow-[1px_2px_3px_rgba(0,0,0,0.25)]">
        {highlightItems.map((item) => (
          <BigMenuItem key={item.name.join('')} item={item} />
        ))}
        <div className="h-px bg-[#dcdcdc]" />
        <button role="menuitem" className="flex h-[26px] w-full items-center pl-[30px] text-left text-[#606060]">
          <Mnemonic parts={['', 'M', 'ore Rules...']} />
        </button>
      </div>
    </div>
  );
}

function FormulaBar() {
  return (
    <div className="flex shrink-0 items-center px-[5px] pt-[9px] pb-[9px] text-[12px] text-[#555]">
      <div className="relative flex items-center">
        <input aria-label="Name box" defaultValue="A1" className="h-6 w-[95px] border border-[#cfcfcf] bg-white pl-[6px]" />
        <span className="absolute right-[6px]">
          <svg width="7" height="4" viewBox="0 0 7 4"><path d="M0 0h7L3.500 4z" fill="#666" /></svg>
        </span>
      </div>
      <svg width="2" height="10" viewBox="0 0 2 10" className="mx-[13px] shrink-0"><path d="M0 0h2v2H0zM0 4h2v2H0zM0 8h2v2H0z" fill="#b0b0b0" /></svg>
      <div className="mr-[3px] flex h-6 w-[103px] shrink-0 items-center justify-around border border-[#cfcfcf] bg-white">
        <button aria-label="Cancel">
          <svg width="10" height="10" viewBox="0 0 10 10" stroke="#bbb" strokeWidth="1.600"><path d="M0 0l10 10M10 0 0 10" /></svg>
        </button>
        <button aria-label="Enter">
          <svg width="12" height="10" viewBox="0 0 12 10" fill="none" stroke="#bbb" strokeWidth="2"><path d="M1 5l3.500 4L11 1" /></svg>
        </button>
        <button aria-label="Insert function" className="font-['Liberation_Serif',serif] text-[14px] font-bold italic">
          f<span className="text-[11px]">x</span>
        </button>
      </div>
      <div className="relative flex min-w-0 flex-1 items-center">
        <input aria-label="Formula" defaultValue="Column No 1" className="h-6 w-full border border-[#cfcfcf] bg-white pl-[10px]" />
        <svg width="8" height="6" viewBox="0 0 8 6" className="absolute right-1" fill="none" stroke="#555" strokeWidth="2"><path d="M1 1l3 3 3-3" /></svg>
      </div>
    </div>
  );
}

function Sheet() {
  return (
    <div className="flex min-h-0 flex-1">
      <div className="relative min-w-0 flex-1 overflow-hidden border-r border-b border-[#ababab]">
        <table className="w-full table-fixed border-separate border-spacing-0 text-center text-[12px] leading-[15px] text-[#1c1c1c]">
          <colgroup>
            <col className="w-[24px]" />
            <col className="w-[81px]" />
            <col className="w-[81px]" />
            {columns.slice(2, -1).map((c) => (
              <col key={c} className="w-[60px]" />
            ))}
            <col />
          </colgroup>
          <thead>
            <tr className="h-[19px]">
              <td className="border-r border-b border-[#ababab] bg-[#e6e6e6] p-0">
                <svg width="12" height="12" viewBox="0 0 12 12" className="ml-[9px]"><path d="M12 0v11H0z" fill="#b5b5b5" /></svg>
              </td>
              {columns.map((c, i) => (
                <th
                  key={c}
                  scope="col"
                  className={`border-r border-b border-r-[#c9c9c9] border-b-[#9f9f9f] p-0 font-normal ${i < 2 ? 'bg-[#d2d2d2] text-[#3b7a57]' : 'bg-[#e6e6e6] text-[#333]'}`}
                >
                  {c}
                </th>
              ))}
            </tr>
          </thead>
          <tbody>
            {rows.map((row) => {
              const selected = row.n <= 21;
              return (
                <tr key={row.n} className={row.n % 4 === 0 ? 'h-[18px]' : 'h-[19px]'}>
                  <th
                    scope="row"
                    className={`border-r border-b border-r-[#ababab] border-b-[#c4c4c4] p-0 font-normal ${selected ? 'bg-[#d8d8d8] text-[#3b7a57]' : 'bg-[#e6e6e6] text-[#333]'}`}
                  >
                    {row.n}
                  </th>
                  <td
                    className={`border-r border-b p-0 whitespace-nowrap ${selected ? 'border-[#a6a6a6]' : 'border-[#d4d4d4]'} ${selected && row.n > 1 ? 'bg-[#c6c6c6]' : 'bg-white'}`}
                  >
                    {row.a}
                  </td>
                  <td className={`border-r border-b p-0 whitespace-nowrap ${selected ? 'border-[#a6a6a6] bg-[#c6c6c6]' : 'border-[#d4d4d4] bg-white'}`}>
                    {row.b}
                  </td>
                  {columns.slice(2).map((c) => (
                    <td key={c} className="border-r border-b border-[#d4d4d4] bg-white p-0" />
                  ))}
                </tr>
              );
            })}
          </tbody>
        </table>
        {/* selection outline with its fill handle */}
        <div className="absolute top-[18px] left-[23px] h-[396px] w-[163px] border-2 border-[#217346]">
          <div className="absolute -right-[3px] -bottom-[3px] size-[6px] border-t border-l border-white bg-[#217346]" />
        </div>
      </div>

      <div className="flex w-5 shrink-0 flex-col items-center pt-[2px]">
        <button aria-label="Scroll up" className="flex h-[15px] w-[14px] items-center justify-center border border-[#b5b5b5] bg-white">
          <svg width="7" height="4" viewBox="0 0 7 4"><path d="M0 4h7L3.500 0z" fill="#777" /></svg>
        </button>
        <div className="w-[14px] flex-1 bg-[#d8d8d8] pb-5">
          <div className="h-full border-x border-b border-[#b5b5b5] bg-white" />
        </div>
        <button aria-label="Scroll down" className="flex h-[14px] w-[14px] items-center justify-center border border-[#b5b5b5] bg-white">
          <svg width="7" height="4" viewBox="0 0 7 4"><path d="M0 0h7L3.500 4z" fill="#666" /></svg>
        </button>
      </div>
    </div>
  );
}

function SheetTabs() {
  return (
    <div className="flex h-[27px] shrink-0 items-start pr-5 text-[12px] text-[#666]">
      <div className="flex h-[26px] w-[94px] shrink-0 items-center gap-[22px] pl-[25px]">
        <button aria-label="Previous sheet"><svg width="4" height="7" viewBox="0 0 4 7"><path d="M4 0v7L0 3.500z" fill="#bdbdbd" /></svg></button>
        <button aria-label="Next sheet"><svg width="4" height="7" viewBox="0 0 4 7"><path d="M0 0v7l4-3.500z" fill="#bdbdbd" /></svg></button>
      </div>
      <button className="h-6 w-[61px] border-b-2 border-[#217346] bg-white pt-1 font-bold text-[#217346]">Sheet1</button>
      <button className="h-6 w-[60px] pt-[3px]">Sheet3</button>
      <div className="mt-1 h-5 w-px bg-[#b0b0b0]" />
      <button className="h-6 w-[59px] pt-[3px]">Sheet2</button>
      <div className="mt-1 h-5 w-px bg-[#b0b0b0]" />
      <button aria-label="New sheet" className="mt-[5px] ml-[30px]">
        <svg width="16" height="16" viewBox="0 0 16 16" fill="none" stroke="#777"><circle cx="8" cy="8" r="7" /><path d="M4.500 8h7M8 4.500v7" strokeWidth="1.500" /></svg>
      </button>
      <svg width="2" height="10" viewBox="0 0 2 10" className="mt-[9px] mr-[14px] ml-auto"><path d="M0 0h2v2H0zM0 4h2v2H0zM0 8h2v2H0z" fill="#b0b0b0" /></svg>
      <div className="mt-[7px] flex h-[14px] w-[477px]">
        <button aria-label="Scroll left" className="flex w-[15px] items-center justify-center border border-[#b5b5b5] bg-white">
          <svg width="4" height="7" viewBox="0 0 4 7"><path d="M4 0v7L0 3.500z" fill="#666" /></svg>
        </button>
        <div className="flex-1 bg-[#dadada] pr-[25px]">
          <div className="h-full border-y border-r border-[#b5b5b5] bg-white" />
        </div>
        <button aria-label="Scroll right" className="flex w-[14px] items-center justify-center border border-[#b5b5b5] bg-white">
          <svg width="4" height="7" viewBox="0 0 4 7"><path d="M0 0v7l4-3.500z" fill="#666" /></svg>
        </button>
      </div>
    </div>
  );
}

function StatusBar() {
  return (
    <footer className="flex h-[21px] shrink-0 items-center border-t border-[#c6c6c6] bg-[#f3f3f3] pr-[7px] pb-[2px] pl-2 text-[10px] text-[#333]">
      <span>Ready</span>
      <div className="mr-[17px] ml-auto flex gap-[15px] whitespace-nowrap">
        <span>Average: 515652.5455</span>
        <span>Count: 35</span>
        <span>Sum: 17016534</span>
      </div>
      <button aria-label="Normal view" className="flex h-5 w-9 items-center justify-center bg-[#c8c8c8]">
        <svg width="13" height="13" viewBox="0 0 13 13" fill="none" stroke="#666"><path d="M.5.5h12v12H.5zM.5 4.500h12M.5 8.500h12M4.500.5v12M8.500.5v12" /></svg>
      </button>
      <button aria-label="Page layout view" className="flex h-5 w-9 items-center justify-center">
        <svg width="13" height="13" viewBox="0 0 13 13" fill="none" stroke="#666"><path d="M.5.5h12v12H.5zM3.500 2.500h6v8h-6zM5 4.500h3M5 6.500h3M5 8.500h3" /></svg>
      </button>
      <button aria-label="Page break preview" className="flex h-5 w-9 items-center justify-center">
        <svg width="14" height="13" viewBox="0 0 14 13" fill="none" stroke="#666"><path d="M.5.5h13v12H.5zM3.500.5v7h7v-7M7 .5v4" /></svg>
      </button>
      <button aria-label="Zoom out" className="ml-[3px] flex h-5 w-[7px] items-center"><span className="h-[2px] w-full bg-[#555]" /></button>
      <input
        type="range"
        aria-label="Zoom"
        defaultValue={50}
        className="mx-1 h-[12px] w-[92px] appearance-none bg-transparent [&::-webkit-slider-runnable-track]:h-px [&::-webkit-slider-runnable-track]:bg-[#b0b0b0] [&::-webkit-slider-thumb]:-mt-[5px] [&::-webkit-slider-thumb]:h-[11px] [&::-webkit-slider-thumb]:w-1 [&::-webkit-slider-thumb]:appearance-none [&::-webkit-slider-thumb]:bg-[#666]"
      />
      <button aria-label="Zoom in" className="mr-[10px]">
        <svg width="7" height="7" viewBox="0 0 7 7" stroke="#555" strokeWidth="1.500"><path d="M0 3.500h7M3.500 0v7" /></svg>
      </button>
      <span>100%</span>
    </footer>
  );
}

function Taskbar() {
  return (
    <div className="flex h-[37px] shrink-0 items-stretch bg-linear-to-r from-[#21393f] via-[#22343f] to-[#18213f] text-white">
      <button aria-label="Start" className="flex w-[45px] shrink-0 items-center justify-center">
        <svg width="15" height="15" viewBox="0 0 15 15" fill="#fff"><path d="M0 2l6.500-1v6H0zM7.500.9 15 0v7H7.500zM0 8h6.500v6L0 13zM7.500 8H15v7l-7.500-1z" /></svg>
      </button>
      <label className="flex w-[322px] shrink-0 items-center gap-[10px] border-b border-[#aaa] bg-[#f2f2f2] pl-[11px] text-[#333]">
        <Search size={16} strokeWidth={1.5} className="-scale-x-100" />
        <input aria-label="Search" placeholder="Type here to search" className="min-w-0 flex-1 bg-transparent text-[13px] placeholder:text-[#444]" />
      </label>
      {apps.map((app) => (
        <button key={app.name} aria-label={app.name} className={`relative flex w-[46px] shrink-0 items-center justify-center ${app.active ? 'bg-[#4a5c66]' : ''}`}>
          {app.icon}
          {app.open && <span className={`absolute bottom-0 h-[2px] bg-[#76b9ed] ${app.active ? 'w-full' : 'w-[37px]'}`} />}
        </button>
      ))}
      <div className="mr-[23px] ml-auto flex items-center gap-2">
        <svg width="12" height="7" viewBox="0 0 12 7" fill="none" stroke="#fff" strokeWidth="1.400"><path d="M1 6l5-5 5 5" /></svg>
        <svg width="14" height="17" viewBox="0 0 14 17" fill="none" stroke="#fff"><path d="M4.500 1h5v9h-5z" fill="#fff" /><path d="M2.500 9v4h9V9M7 13v3M4 16h6" /></svg>
        <svg width="15" height="10" viewBox="0 0 15 10" fill="none" stroke="#fff"><path d="M1.500.5h11v9h-11zM12.500 3.500h2v3h-2" /><path d="M3 2h2v6H3z" fill="#fff" /></svg>
        <svg width="14" height="14" viewBox="0 0 14 14" fill="none" stroke="#e0e4ea" strokeWidth="1.300"><path d="M1 11Q3 2 13 1.500M4 12Q5 6 13 5M7 13q1-4 6-4.500" /><circle cx="11.500" cy="12" r="1" fill="#fff" /></svg>
        <svg width="17" height="14" viewBox="0 0 17 14" fill="none" stroke="#fff"><path d="M1 5h2.500L7 2v10L3.500 9H1zM9.500 5q1.500 2 0 4M12 3q3 4 0 8M14 1q4.500 6 0 12" /></svg>
        <div className="mr-1 flex w-[46px] flex-col items-center pb-[3px] text-[11px] leading-[17px] whitespace-nowrap">
          <span>1:35 PM</span>
          <span>5/8/2020</span>
        </div>
        <svg width="17" height="16" viewBox="0 0 17 16" className="ml-[6px]"><path d="M0 0h16v12h-4l-4 4v-4H0z" fill="#fff" /><path d="M3 3.500h10M3 6h10M3 8.500h6" stroke="#223" /><circle cx="12" cy="11" r="3.500" fill="none" stroke="#223" /></svg>
      </div>
    </div>
  );
}

function Pointer() {
  return (
    <div className="pointer-events-none absolute top-[284px] left-[998px] z-30">
      <div className="size-9 rounded-full bg-[#e8ec3c] opacity-85 mix-blend-multiply" />
      <svg width="12" height="19" viewBox="0 0 12 19" className="absolute top-[15px] left-[18px]">
        <path d="M.5.5v15l3.500-3 2.500 5.500 2.500-1-2.500-5.500h4.500z" fill="#fff" stroke="#333" />
      </svg>
    </div>
  );
}

export default function App() {
  return (
    <div className="relative flex h-screen flex-col overflow-hidden bg-[#e6e6e6] font-['Open_Sans','Noto_Sans',sans-serif] text-[11px]">
      <header className="relative shrink-0 bg-[#217346] text-white">
        <TitleArt />
        <TitleBar />
        <TabBar />
      </header>
      <Ribbon />
      <FormulaBar />
      <Sheet />
      <SheetTabs />
      <StatusBar />
      <Taskbar />
      <Pointer />
    </div>
  );
}
